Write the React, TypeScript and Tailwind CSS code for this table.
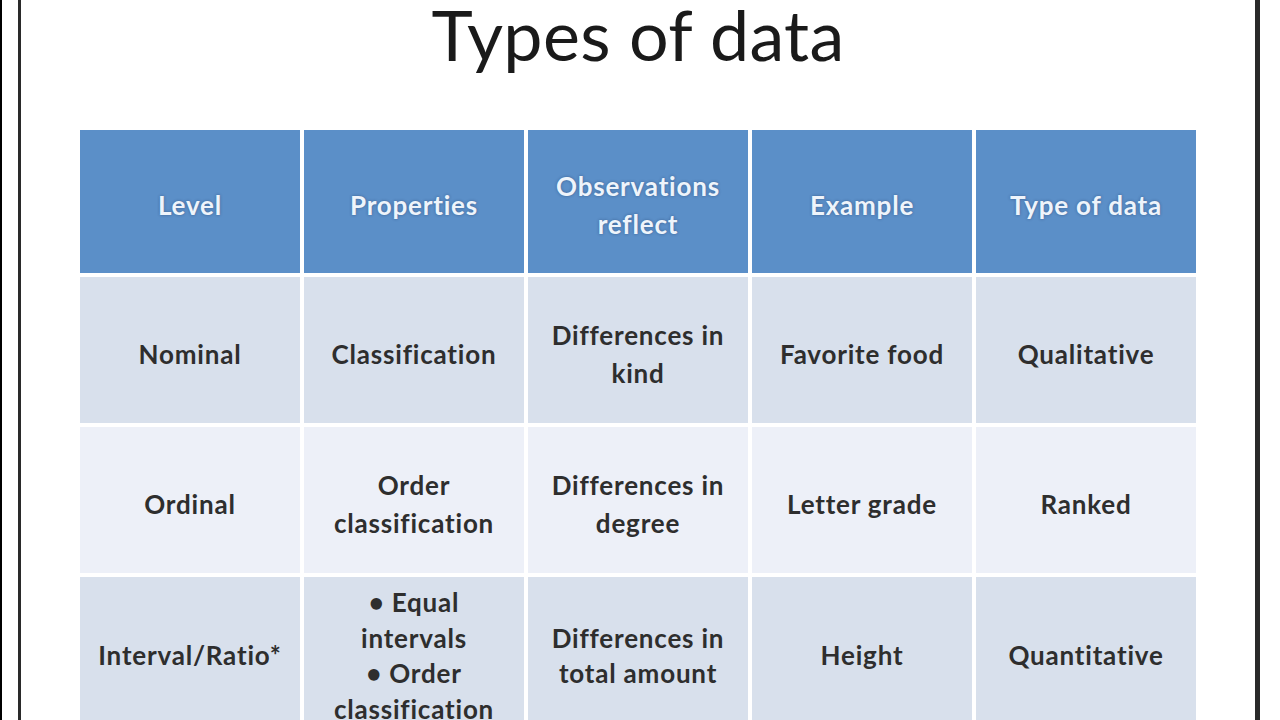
const header = ['Level', 'Properties', 'Observations reflect', 'Example', 'Type of data']

const rows: (string | string[])[][] = [
  ['Nominal', 'Classification', 'Differences in kind', 'Favorite food', 'Qualitative'],
  ['Ordinal', 'Order classification', 'Differences in degree', 'Letter grade', 'Ranked'],
  [
    'Interval/Ratio*',
    ['• Equal', 'intervals', '• Order', 'classification'],
    'Differences in total amount',
    'Height',
    'Quantitative',
  ],
]

function CellText({ value }: { value: string | string[] }) {
  if (Array.isArray(value)) {
    return (
      <div>
        {value.map((line) => (
          <div key={line}>{line}</div>
        ))}
      </div>
    )
  }
  return <div className="px-[14px]">{value}</div>
}

export default function App() {
  return (
    <div className="h-[720px] w-full overflow-hidden bg-white border-l-[2px] border-black flex">
      {/* Slide */}
      <div className="ml-[16px] mr-[20px] flex-1 h-full border-l-[3px] border-r-[5px] border-[#2a2a2a] bg-white px-[59px] flex flex-col font-['Lato','Liberation_Sans',sans-serif]">
        <h1 className="h-[130px] shrink-0 pt-[2px] text-center text-[70px] leading-[64px] text-[#1a1a1a] tracking-[0.3px]">
          Types of data
        </h1>

        <div className="grid grid-cols-5 gap-[4px] bg-white shrink-0">
          {header.map((h) => (
            <div
              key={h}
              className="h-[143px] bg-[#5b8fc8] flex items-center justify-center text-center px-[14px] pt-[6px] text-[26px] leading-[38px] tracking-[0.8px] font-bold text-[#eef4fb] [text-shadow:0_0_3px_rgba(20,40,80,0.45)]"
            >
              {h}
            </div>
          ))}

          {rows.map((row, ri) => (
            <div key={ri} className="contents">
              {row.map((cell, ci) => (
                <div
                  key={ci}
                  className={
                    'flex items-center justify-center text-center text-[26px] tracking-[0.8px] font-bold text-[#2e2e2e] ' +
                    (ri === 2 ? 'h-[158px] leading-[35.5px] ' : 'h-[146px] pt-[8px] leading-[38px] ') +
                    (ri % 2 === 0 ? 'bg-[#d8e0ec]' : 'bg-[#edf0f8]')
                  }
                >
                  <CellText value={cell} />
                </div>
              ))}
            </div>
          ))}
        </div>
      </div>
    </div>
  )
}
